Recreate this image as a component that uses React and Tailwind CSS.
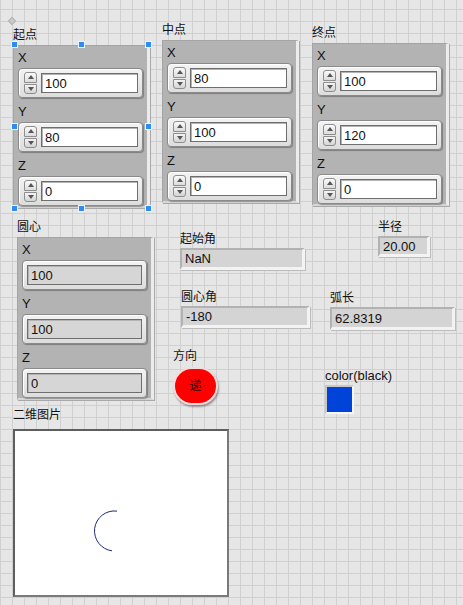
import React from 'react';

const Spinner = () => (
  <div className="flex flex-col w-[13px] h-[22px] gap-[1px] shrink-0">
    <div className="flex-1 rounded-t-[3px] border border-[#8e8e8e] bg-linear-to-b from-[#fbfbfb] to-[#dcdcdc] flex items-center justify-center">
      <div className="w-0 h-0 border-l-[3px] border-r-[3px] border-b-[4px] border-l-transparent border-r-transparent border-b-[#555]" />
    </div>
    <div className="flex-1 rounded-b-[3px] border border-[#8e8e8e] bg-linear-to-b from-[#f4f4f4] to-[#d4d4d4] flex items-center justify-center">
      <div className="w-0 h-0 border-l-[3px] border-r-[3px] border-t-[4px] border-l-transparent border-r-transparent border-t-[#555]" />
    </div>
  </div>
);

const NumCtrl = ({ value, indicator }) => (
  <div
    className={`w-[125px] h-[30px] rounded-[4px] border border-[#8a8a8a] bg-linear-to-b from-[#f3f3f3] to-[#dddddd] shadow-[inset_1px_1px_0_#ffffff,1px_1px_1px_rgba(0,0,0,0.3)] flex items-center ${
      indicator ? 'pl-[4px] pr-[4px]' : 'pl-[5px] pr-[4px] gap-[4px]'
    }`}
  >
    {!indicator && <Spinner />}
    <div
      className={`flex-1 h-[20px] border border-[#6e6e6e] ${
        indicator ? 'bg-[#d6d6d6]' : 'bg-white'
      } shadow-[inset_1px_1px_0_#b4b4b4] flex items-center pl-[3px] text-[13px] leading-none text-[#111]`}
    >
      {value}
    </div>
  </div>
);

const Row = ({ label, first, children }) => (
  <>
    <div className={`${first ? 'h-[22px]' : 'h-[24px]'} flex items-end pb-[3px] text-[13px] leading-[14px] text-[#111]`}>
      {label}
    </div>
    {children}
  </>
);

const Cluster = ({ label, pos, values, indicator }) => (
  <div className={`absolute flex flex-col ${pos}`}>
    <div className="h-[17px] text-[12px] leading-[14px] text-[#111]">{label}</div>
    <div className="w-[137px] h-[163px] bg-[#b3b3b3] border-l border-t border-[#a4a4a4] border-r-[3px] border-r-[#ececec] border-b-[2px] border-b-[#d6d6d6] shadow-[1px_1px_0_#a9a9a9] pl-[4px]">
      <Row label="X" first>
        <NumCtrl value={values[0]} indicator={indicator} />
      </Row>
      <Row label="Y">
        <NumCtrl value={values[1]} indicator={indicator} />
      </Row>
      <Row label="Z">
        <NumCtrl value={values[2]} indicator={indicator} />
      </Row>
    </div>
  </div>
);

const Indicator = ({ label, pos, field, value }) => (
  <div className={`absolute flex flex-col ${pos}`}>
    <div className="h-[16px] text-[12px] leading-[14px] text-[#111] whitespace-nowrap">{label}</div>
    <div
      className={`${field} bg-[#d4d4d4] border-t-2 border-l-2 border-t-[#b2b2b2] border-l-[#b2b2b2] border-r-[3px] border-b-[3px] border-r-[#f3f3f3] border-b-[#f3f3f3] shadow-[1px_1px_0_#bcbcbc] flex items-center pl-[3px] text-[13px] leading-none text-[#111]`}
    >
      {value}
    </div>
  </div>
);

const Handle = ({ pos }) => (
  <div className={`absolute w-[7px] h-[7px] bg-[#2f8cf0] border border-[#eaf4ff] ${pos}`} />
);

export default function App() {
  return (
    <div className="relative w-[463px] h-[605px] overflow-hidden bg-[#e6e6e6] bg-[linear-gradient(to_right,#d0d0d0_1px,transparent_1px),linear-gradient(to_bottom,#d0d0d0_1px,transparent_1px)] bg-[size:12px_12px] bg-[position:0px_9px] font-['Liberation_Sans','Noto_Sans_CJK_SC',sans-serif]">
      <div className="absolute left-[9px] top-[18px] w-[6px] h-[6px] rotate-45 bg-[#cacaca] border border-[#b4b4b4]" />

      <Cluster label="起点" pos="left-[13px] top-[28px]" values={['100', '80', '0']} />
      <Cluster label="中点" pos="left-[162px] top-[23px]" values={['80', '100', '0']} />
      <Cluster label="终点" pos="left-[312px] top-[26px]" values={['100', '120', '0']} />
      <Cluster label="圆心" pos="left-[17px] top-[220px]" values={['100', '100', '0']} indicator />

      <Handle pos="left-[11px] top-[41px]" />
      <Handle pos="left-[78px] top-[41px]" />
      <Handle pos="left-[145px] top-[41px]" />
      <Handle pos="left-[11px] top-[123px]" />
      <Handle pos="left-[145px] top-[123px]" />
      <Handle pos="left-[11px] top-[205px]" />
      <Handle pos="left-[78px] top-[205px]" />
      <Handle pos="left-[145px] top-[205px]" />

      <Indicator label="起始角" pos="left-[180px] top-[232px]" field="w-[125px] h-[22px]" value="NaN" />
      <Indicator label="圆心角" pos="left-[181px] top-[290px]" field="w-[129px] h-[22px]" value="-180" />
      <Indicator label="半径" pos="left-[378px] top-[220px]" field="w-[52px] h-[21px]" value="20.00" />
      <Indicator label="弧长" pos="left-[330px] top-[291px]" field="w-[125px] h-[23px]" value="62.8319" />

      <div className="absolute left-[173px] top-[349px] flex flex-col">
        <div className="h-[18px] text-[12px] leading-[14px] text-[#111]">方向</div>
        <div className="w-[45px] h-[38px] rounded-full bg-[#ff0000] border-2 border-[#f5dcdc] shadow-[1px_2px_2px_rgba(0,0,0,0.35)] flex items-center justify-center text-[12px] leading-none text-[#2a0000]">
          递
        </div>
      </div>

      <div className="absolute left-[325px] top-[369px] flex flex-col">
        <div className="h-[16px] text-[13px] leading-[14px] text-[#111]">color(black)</div>
        <div className="w-[29px] h-[29px] border-2 border-t-[#c8c8c8] border-l-[#c8c8c8] border-r-[#f6f6f6] border-b-[#f6f6f6] bg-[#0043d8]" />
      </div>

      <div className="absolute left-[13px] top-[408px] flex flex-col">
        <div className="h-[21px] text-[12px] leading-[14px] text-[#111]">二维图片</div>
        <div className="w-[216px] h-[168px] bg-white border-2 border-t-[#5e5e5e] border-l-[#5e5e5e] border-r-[#7a7a7a] border-b-[#7a7a7a]">
          <svg width="212" height="164" viewBox="0 0 212 164">
            <path d="M102 80.1 A20 20 0 0 0 97 119.8" fill="none" stroke="#1c2878" strokeWidth="1" />
          </svg>
        </div>
      </div>
    </div>
  );
}
